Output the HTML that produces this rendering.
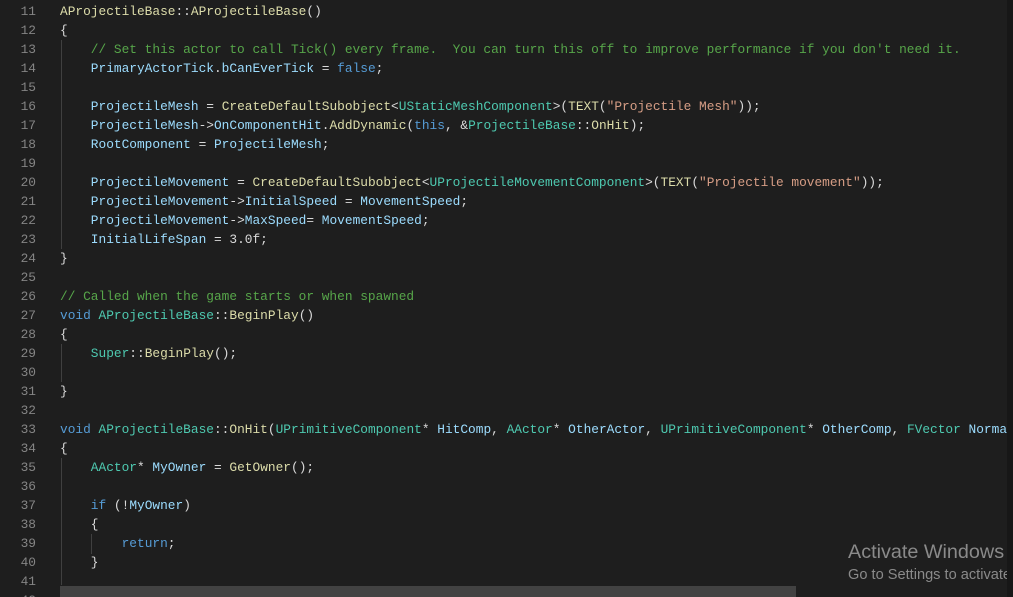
<!DOCTYPE html>
<html><head><style>
html,body{margin:0;padding:0;background:#1e1e1e;width:1013px;height:597px;overflow:hidden}
#ed{position:absolute;left:0;top:0;width:1007px;height:597px;overflow:hidden;font-family:"Liberation Mono",monospace;font-size:12.83px;}
.l{position:absolute;left:0;height:19px;line-height:19px;white-space:pre;color:#dadada}
.n{display:inline-block;width:36px;text-align:right;color:#858585;margin-right:24px}
.c{color:#57a64a}.k{color:#569cd6}.t{color:#4ec9b0}.s{color:#d69d85}.f{color:#dcdcaa}.v{color:#9cdcfe}
.g{position:absolute;width:1px;background:#404040}
.aw{position:absolute;font-family:"Liberation Sans",sans-serif;color:#8a8a8a;white-space:nowrap}
</style></head><body>
<div id="ed">
<div class="g" style="left:61px;top:40px;height:209px"></div>
<div class="g" style="left:61px;top:344px;height:38px"></div>
<div class="g" style="left:61px;top:458px;height:127px"></div>
<div class="g" style="left:91px;top:534px;height:20px"></div>
<div class="l" style="top:2px"><span class="n">11</span><span class="f">AProjectileBase</span>::<span class="f">AProjectileBase</span>()</div>
<div class="l" style="top:21px"><span class="n">12</span>{</div>
<div class="l" style="top:40px"><span class="n">13</span>    <span class="c">// Set this actor to call Tick() every frame.  You can turn this off to improve performance if you don't need it.</span></div>
<div class="l" style="top:59px"><span class="n">14</span>    <span class="v">PrimaryActorTick</span>.<span class="v">bCanEverTick</span> = <span class="k">false</span>;</div>
<div class="l" style="top:78px"><span class="n">15</span></div>
<div class="l" style="top:97px"><span class="n">16</span>    <span class="v">ProjectileMesh</span> = <span class="f">CreateDefaultSubobject</span>&lt;<span class="t">UStaticMeshComponent</span>&gt;(<span class="f">TEXT</span>(<span class="s">"Projectile Mesh"</span>));</div>
<div class="l" style="top:116px"><span class="n">17</span>    <span class="v">ProjectileMesh</span>-&gt;<span class="v">OnComponentHit</span>.<span class="f">AddDynamic</span>(<span class="k">this</span>, &amp;<span class="t">ProjectileBase</span>::<span class="f">OnHit</span>);</div>
<div class="l" style="top:135px"><span class="n">18</span>    <span class="v">RootComponent</span> = <span class="v">ProjectileMesh</span>;</div>
<div class="l" style="top:154px"><span class="n">19</span></div>
<div class="l" style="top:173px"><span class="n">20</span>    <span class="v">ProjectileMovement</span> = <span class="f">CreateDefaultSubobject</span>&lt;<span class="t">UProjectileMovementComponent</span>&gt;(<span class="f">TEXT</span>(<span class="s">"Projectile movement"</span>));</div>
<div class="l" style="top:192px"><span class="n">21</span>    <span class="v">ProjectileMovement</span>-&gt;<span class="v">InitialSpeed</span> = <span class="v">MovementSpeed</span>;</div>
<div class="l" style="top:211px"><span class="n">22</span>    <span class="v">ProjectileMovement</span>-&gt;<span class="v">MaxSpeed</span>= <span class="v">MovementSpeed</span>;</div>
<div class="l" style="top:230px"><span class="n">23</span>    <span class="v">InitialLifeSpan</span> = 3.0f;</div>
<div class="l" style="top:249px"><span class="n">24</span>}</div>
<div class="l" style="top:268px"><span class="n">25</span></div>
<div class="l" style="top:287px"><span class="n">26</span><span class="c">// Called when the game starts or when spawned</span></div>
<div class="l" style="top:306px"><span class="n">27</span><span class="k">void</span> <span class="t">AProjectileBase</span>::<span class="f">BeginPlay</span>()</div>
<div class="l" style="top:325px"><span class="n">28</span>{</div>
<div class="l" style="top:344px"><span class="n">29</span>    <span class="t">Super</span>::<span class="f">BeginPlay</span>();</div>
<div class="l" style="top:363px"><span class="n">30</span></div>
<div class="l" style="top:382px"><span class="n">31</span>}</div>
<div class="l" style="top:401px"><span class="n">32</span></div>
<div class="l" style="top:420px"><span class="n">33</span><span class="k">void</span> <span class="t">AProjectileBase</span>::<span class="f">OnHit</span>(<span class="t">UPrimitiveComponent</span>* <span class="v">HitComp</span>, <span class="t">AActor</span>* <span class="v">OtherActor</span>, <span class="t">UPrimitiveComponent</span>* <span class="v">OtherComp</span>, <span class="t">FVector</span> <span class="v">NormalImpulse</span></div>
<div class="l" style="top:439px"><span class="n">34</span>{</div>
<div class="l" style="top:458px"><span class="n">35</span>    <span class="t">AActor</span>* <span class="v">MyOwner</span> = <span class="f">GetOwner</span>();</div>
<div class="l" style="top:477px"><span class="n">36</span></div>
<div class="l" style="top:496px"><span class="n">37</span>    <span class="k">if</span> (!<span class="v">MyOwner</span>)</div>
<div class="l" style="top:515px"><span class="n">38</span>    {</div>
<div class="l" style="top:534px"><span class="n">39</span>        <span class="k">return</span>;</div>
<div class="l" style="top:553px"><span class="n">40</span>    }</div>
<div class="l" style="top:572px"><span class="n">41</span></div>
<div class="l" style="top:591px"><span class="n">42</span></div>
<div style="position:absolute;left:60px;top:586px;width:736px;height:11px;background:#424242"></div>
<div class="aw" style="left:848px;top:541px;font-size:19.8px">Activate Windows</div>
<div class="aw" style="left:848px;top:567px;font-size:14.6px">Go to Settings to activate Windows.</div>
</div>
<div style="position:absolute;left:1007px;top:0;width:6px;height:597px;background:#171717"></div>
</body></html>
